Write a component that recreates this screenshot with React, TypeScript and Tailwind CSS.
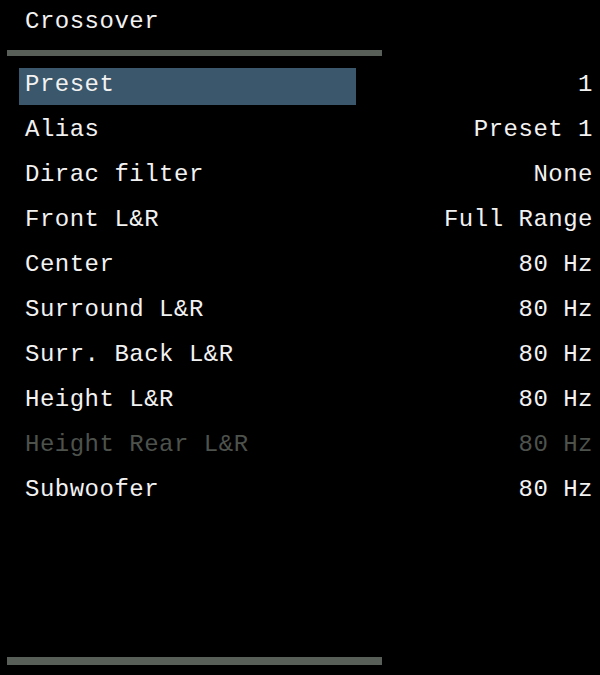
const rows = [
  { label: "Preset", value: "1", active: true },
  { label: "Alias", value: "Preset 1" },
  { label: "Dirac filter", value: "None" },
  { label: "Front L&R", value: "Full Range" },
  { label: "Center", value: "80 Hz" },
  { label: "Surround L&R", value: "80 Hz" },
  { label: "Surr. Back L&R", value: "80 Hz" },
  { label: "Height L&R", value: "80 Hz" },
  { label: "Height Rear L&R", value: "80 Hz", disabled: true },
  { label: "Subwoofer", value: "80 Hz" },
];

export default function App() {
  return (
    <div
      className="w-[600px] h-[675px] bg-black text-[#f2f2f2] flex flex-col overflow-hidden"
      style={{ fontFamily: '"Liberation Mono", "DejaVu Sans Mono", monospace' }}
    >
      <div className="pl-[25px] pt-[8px] h-[50px] text-[24px] leading-[28px] tracking-[0.5px]">
        Crossover
      </div>
      <div className="ml-[7px] w-[375px] h-[6px] bg-[#585e58]" />
      <div className="flex flex-col pt-[8px] flex-1">
        {rows.map((r) => (
          <div
            key={r.label}
            className={`h-[45px] flex items-center justify-between pl-[19px] pr-[7px] text-[24px] tracking-[0.5px] ${
              r.disabled ? "text-[#4d524d]" : ""
            }`}
          >
            <div
              className={`w-[337px] h-[37px] pl-[6px] pb-[4px] flex items-center leading-none ${
                r.active ? "bg-[#3a576b]" : ""
              }`}
            >
              {r.label}
            </div>
            <div className="leading-none pb-[4px]">{r.value}</div>
          </div>
        ))}
      </div>
      <div className="ml-[7px] mb-[10px] w-[375px] h-[8px] bg-[#585e58]" />
    </div>
  );
}
